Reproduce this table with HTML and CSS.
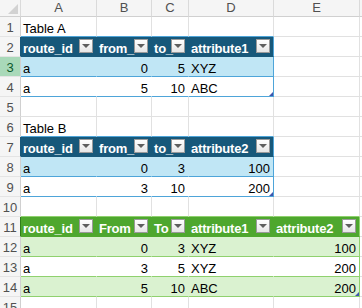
FILE: index.html
```html
<!DOCTYPE html>
<html>
<head>
<meta charset="utf-8">
<link rel="stylesheet" href="styles.css">
</head>
<body>
<div class="sheet">
  <div class="ch corner"></div><div class="ch">A</div><div class="ch">B</div><div class="ch">C</div><div class="ch">D</div><div class="ch">E</div><div class="ch edge"></div>

  <div class="rh">1</div><div class="c tl blue-top">Table A</div><div class="c blue-top"></div><div class="c blue-top"></div><div class="c blue-top"></div><div class="c"></div><div class="c edge"></div>

  <div class="rh rh-blue">2</div>
  <div class="c bh"><span class="ht">route_id</span><span class="fb"></span></div>
  <div class="c bh"><span class="ht">from_</span><span class="fb"></span></div>
  <div class="c bh"><span class="ht">to_</span><span class="fb"></span></div>
  <div class="c bh last"><span class="ht">attribute1</span><span class="fb"></span></div>
  <div class="c"></div><div class="c edge"></div>

  <div class="rh sel">3</div><div class="c bb">a</div><div class="c bb num">0</div><div class="c bb num">5</div><div class="c bb last">XYZ</div><div class="c"></div><div class="c edge"></div>

  <div class="rh">4</div><div class="c bw">a</div><div class="c bw num">5</div><div class="c bw num">10</div><div class="c bw last handle">ABC</div><div class="c"></div><div class="c edge"></div>

  <div class="rh">5</div><div class="c"></div><div class="c"></div><div class="c"></div><div class="c"></div><div class="c"></div><div class="c edge"></div>

  <div class="rh">6</div><div class="c tl blue-top">Table B</div><div class="c blue-top"></div><div class="c blue-top"></div><div class="c blue-top"></div><div class="c"></div><div class="c edge"></div>

  <div class="rh rh-blue">7</div>
  <div class="c bh"><span class="ht">route_id</span><span class="fb"></span></div>
  <div class="c bh"><span class="ht">from_</span><span class="fb"></span></div>
  <div class="c bh"><span class="ht">to_</span><span class="fb"></span></div>
  <div class="c bh last"><span class="ht">attribute2</span><span class="fb"></span></div>
  <div class="c"></div><div class="c edge"></div>

  <div class="rh">8</div><div class="c bb">a</div><div class="c bb num">0</div><div class="c bb num">3</div><div class="c bb last num">100</div><div class="c"></div><div class="c edge"></div>

  <div class="rh">9</div><div class="c bw">a</div><div class="c bw num">3</div><div class="c bw num">10</div><div class="c bw last num handle">200</div><div class="c"></div><div class="c edge"></div>

  <div class="rh">10</div><div class="c green-top"></div><div class="c green-top"></div><div class="c green-top"></div><div class="c green-top"></div><div class="c green-top"></div><div class="c edge"></div>

  <div class="rh rh-green">11</div>
  <div class="c gh"><span class="ht">route_id</span><span class="fb"></span></div>
  <div class="c gh"><span class="ht">From</span><span class="fb"></span></div>
  <div class="c gh"><span class="ht">To</span><span class="fb"></span></div>
  <div class="c gh"><span class="ht">attribute1</span><span class="fb"></span></div>
  <div class="c gh last"><span class="ht">attribute2</span><span class="fb"></span></div>
  <div class="c edge"></div>

  <div class="rh">12</div><div class="c gb">a</div><div class="c gb num">0</div><div class="c gb num">3</div><div class="c gb">XYZ</div><div class="c gb last num">100</div><div class="c edge"></div>

  <div class="rh">13</div><div class="c gw">a</div><div class="c gw num">3</div><div class="c gw num">5</div><div class="c gw">XYZ</div><div class="c gw last num">200</div><div class="c edge"></div>

  <div class="rh">14</div><div class="c gb">a</div><div class="c gb num">5</div><div class="c gb num">10</div><div class="c gb">ABC</div><div class="c gb last num handle">200</div><div class="c edge"></div>

  <div class="rh">15</div><div class="c"></div><div class="c"></div><div class="c"></div><div class="c"></div><div class="c"></div><div class="c edge"></div>
</div>
</body>
</html>
```

FILE: styles.css
```css
html, body {
  margin: 0;
  padding: 0;
  background: #ffffff;
}

body {
  width: 362px;
  height: 308px;
  overflow: hidden;
  font-family: "Liberation Sans", Arial, sans-serif;
  font-size: 13px;
  color: #000000;
}

.sheet {
  display: grid;
  grid-template-columns: 21px 76px 55px 37px 85px 86px 2px;
  grid-template-rows: 17px;
  grid-auto-rows: 20px;
}

.sheet > div {
  box-sizing: border-box;
  border-right: 1px solid #e1e1e1;
  border-bottom: 1px solid #e1e1e1;
  overflow: hidden;
  white-space: nowrap;
}

.ch {
  background: #f5f5f5;
  color: #505050;
  text-align: center;
  line-height: 16px;
  font-size: 13px;
  border-bottom-color: #d0d0d0 !important;
  border-right-color: #dadada !important;
}

.corner {
  position: relative;
  background: #f5f5f5;
}

.corner::after {
  content: "";
  position: absolute;
  right: 2px;
  bottom: 2px;
  width: 0;
  height: 0;
  border-left: 10px solid transparent;
  border-bottom: 10px solid #d2d2d2;
}

.rh {
  background: #f5f5f5;
  color: #505050;
  text-align: center;
  line-height: 22px;
  font-size: 13px;
  border-right-color: #d0d0d0 !important;
  border-bottom-color: #e4e4e4 !important;
}

.rh.sel {
  background: #a9d9b9;
  color: #0e5a2c;
}

.rh-blue {
  border-right-color: #17587a !important;
}

.rh-green {
  border-right-color: #2f7d1b !important;
}

.c {
  padding: 0 3px 0 2px;
  line-height: 24px;
}

.edge {
  padding: 0;
  border-right: none !important;
}

.num {
  text-align: right;
}

.blue-top {
  border-bottom-color: #4ea5d9 !important;
}

.green-top {
  border-bottom-color: #8fd16e !important;
}

/* table header cells: text, with the filter button drawn over its right end */
.sheet > .bh, .sheet > .gh {
  position: relative;
  overflow: visible;
  color: #ffffff;
  font-weight: bold;
  padding: 0 3px 0 2px;
  line-height: 24px;
  letter-spacing: -0.2px;
}

.bh {
  background: #17587a;
  border-right-color: #17587a !important;
  border-bottom-color: #17587a !important;
}

.gh {
  background: #4ea72e;
  border-right-color: #4ea72e !important;
  border-bottom-color: #4ea72e !important;
}

.ht {
  white-space: nowrap;
}

.fb {
  position: absolute;
  right: 3px;
  bottom: 3px;
  box-sizing: border-box;
  width: 14px;
  height: 14px;
  border: 1px solid #9a9a9a;
  background: linear-gradient(#ffffff, #e6e6e6);
  display: flex;
  align-items: center;
  justify-content: center;
}

.fb::before {
  content: "";
  width: 0;
  height: 0;
  border-left: 4px solid transparent;
  border-right: 4px solid transparent;
  border-top: 4px solid #5e5e5e;
}

/* blue table body */
.bb {
  background: #c0e6f5;
  border-right-color: #c0e6f5 !important;
  border-bottom-color: #4ea5d9 !important;
}

.bw {
  background: #ffffff;
  border-right-color: #ffffff !important;
  border-bottom-color: #4ea5d9 !important;
}

.bb.last, .bw.last, .bh.last {
  border-right-color: #4ea5d9 !important;
}

/* green table body */
.gb {
  background: #daf2d0;
  border-right-color: #daf2d0 !important;
  border-bottom-color: #8fd16e !important;
}

.gw {
  background: #ffffff;
  border-right-color: #ffffff !important;
  border-bottom-color: #8fd16e !important;
}

.gb.last, .gw.last, .gh.last {
  border-right-color: #8fd16e !important;
}

.handle {
  position: relative;
}

.handle::after {
  content: "";
  position: absolute;
  right: 0;
  bottom: 0;
  width: 0;
  height: 0;
  border-left: 4px solid transparent;
  border-bottom: 4px solid #3f55ad;
}
```
